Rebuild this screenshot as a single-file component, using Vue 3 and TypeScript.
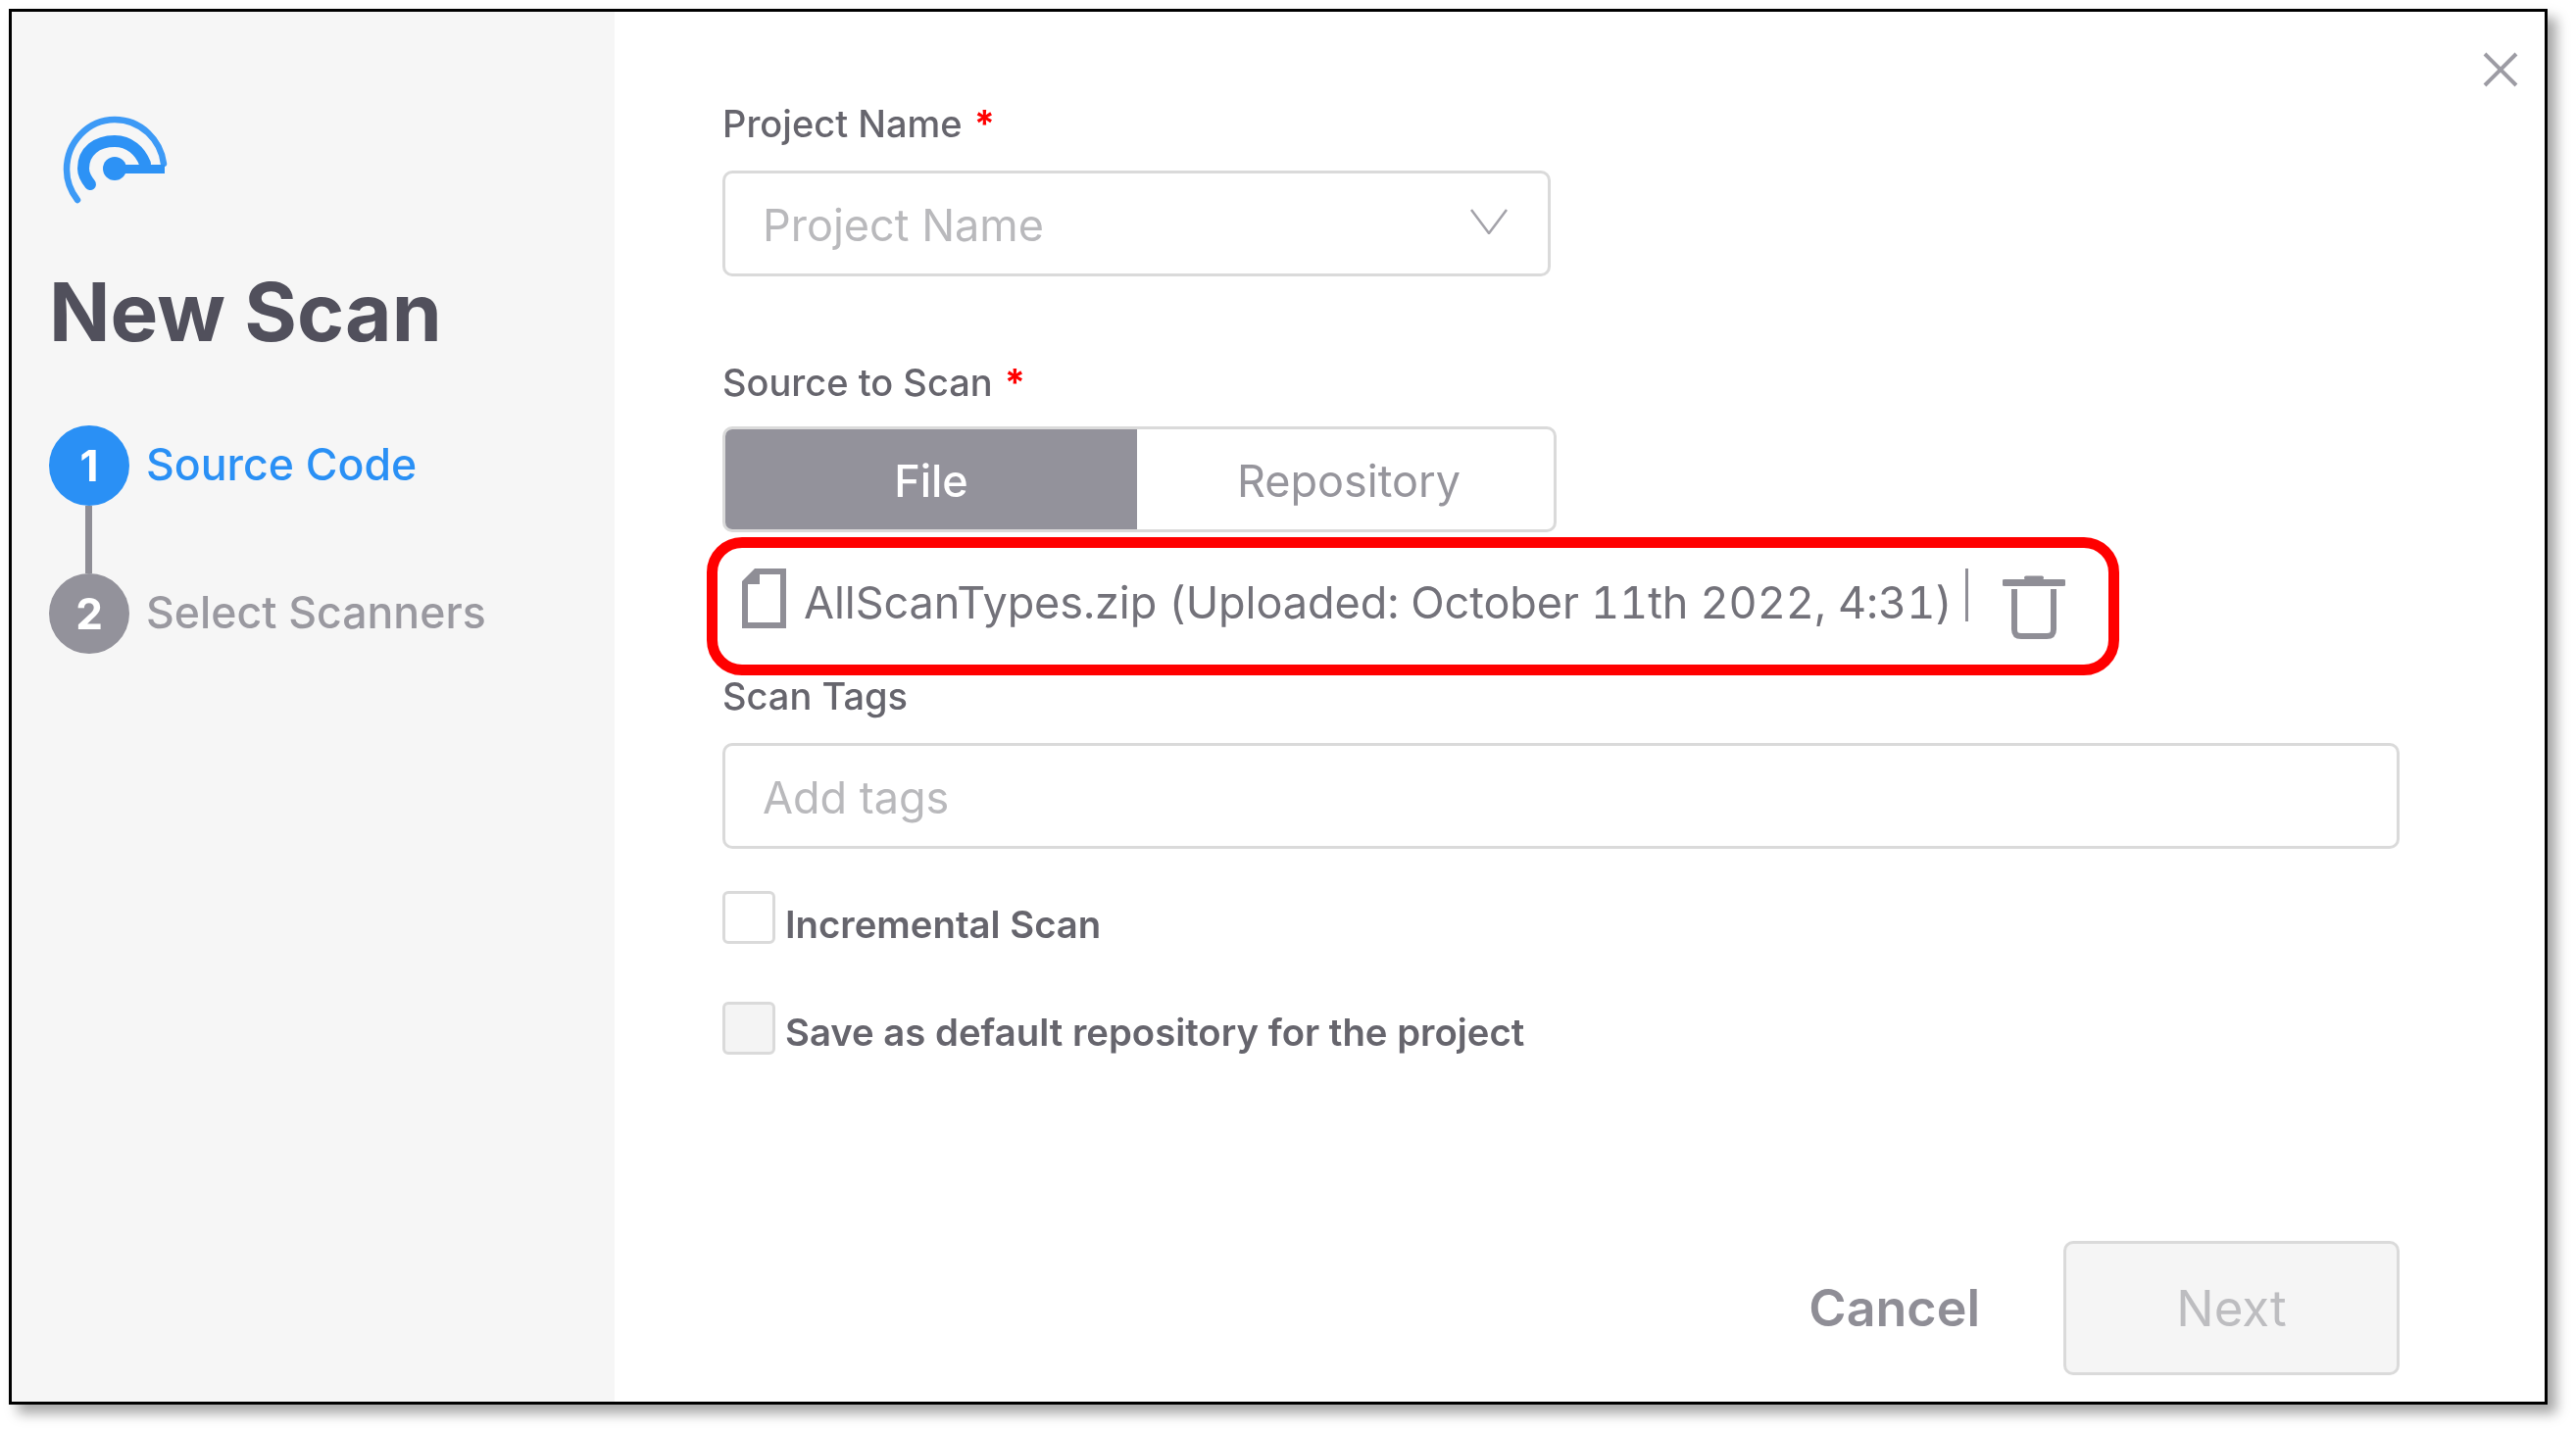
<script setup lang="ts">
const steps: { n: number; label: string; active: boolean }[] = [
  { n: 1, label: 'Source Code', active: true },
  { n: 2, label: 'Select Scanners', active: false },
]
</script>

<template>
  <div class="page">
    <div class="frame">
      <aside class="side">
        <svg class="logo" width="108" height="92" viewBox="0 0 108 92" fill="none">
          <path d="M15 87C8 78 4 68 4 56C4 28 26 5 53 5C80 5 100 26 103 50" stroke="#3d9af6" stroke-width="6.5" stroke-linecap="round" />
          <path d="M28 71C24 66 21 61 21 55C21 37 35 27 53 27C68 27 79 37 84 50" stroke="#2d92f5" stroke-width="12" stroke-linecap="round" />
          <circle cx="53" cy="55" r="12" fill="#2d92f5" />
          <path d="M53 51H104V60H53Z" fill="#2d92f5" />
        </svg>
        <h1 class="title">New Scan</h1>
        <div class="steps">
          <template v-for="(s, i) in steps" :key="s.n">
            <div v-if="i > 0" class="link"></div>
            <div class="step" :class="{ on: s.active }">
              <span class="dot">{{ s.n }}</span>
              <span class="step-label">{{ s.label }}</span>
            </div>
          </template>
        </div>
      </aside>

      <main class="main">
        <svg class="close" width="36" height="36" viewBox="0 0 36 36" fill="none">
          <path d="M2 2L34 34M34 2L2 34" stroke="#9d9ca4" stroke-width="4" />
        </svg>

        <div class="lbl">Project Name <span class="req">*</span></div>
        <div class="field narrow">
          <span class="ph">Project Name</span>
          <svg class="chev" width="38" height="26" viewBox="0 0 38 26" fill="none">
            <path d="M1 1L19 25L37 1" stroke="#a3a2a9" stroke-width="2.5" />
          </svg>
        </div>

        <div class="lbl src">Source to Scan <span class="req">*</span></div>
        <div class="toggle">
          <div class="seg sel">File</div>
          <div class="seg repo">Repository</div>
        </div>

        <div class="file-row">
          <svg class="doc" width="46" height="62" viewBox="0 0 46 62">
            <path fill="#8f8e96" fill-rule="evenodd" d="M13 0H45V61H0V13ZM18 6V16H6V55H39V6Z" />
          </svg>
          <span class="fname">AllScanTypes.zip (Uploaded: October 11th 2022, 4:31)</span>
          <span class="sep"></span>
          <svg class="trash" width="64" height="66" viewBox="0 0 64 66" fill="none">
            <path d="M2 7.5H62" stroke="#8f8e96" stroke-width="7" stroke-linecap="round" />
            <path d="M24 2.5H40" stroke="#8f8e96" stroke-width="4" stroke-linecap="round" />
            <path d="M12 14V55C12 60 14 62 19 62H45C50 62 52 60 52 55V14" stroke="#8f8e96" stroke-width="6" />
          </svg>
          <div class="mark"></div>
        </div>

        <div class="lbl tags">Scan Tags</div>
        <div class="field wide"><span class="ph">Add tags</span></div>

        <label class="check first">
          <span class="box"></span>
          <span class="check-text">Incremental Scan</span>
        </label>
        <label class="check second">
          <span class="box off"></span>
          <span class="check-text">Save as default repository for the project</span>
        </label>

        <footer class="foot">
          <span class="cancel">Cancel</span>
          <div class="next">Next</div>
        </footer>
      </main>
    </div>
  </div>
</template>

<style>
html, body { margin: 0; background: #fff; }
</style>

<style scoped>
.page {
  width: 2628px;
  height: 1463px;
  box-sizing: border-box;
  padding: 9px 0 0 9px;
  font-family: Inter, "Liberation Sans", sans-serif;
  overflow: hidden;
}
.frame {
  width: 2590px;
  height: 1424px;
  box-sizing: border-box;
  border: 3px solid #000;
  background: #fff;
  display: flex;
  box-shadow: 9px 9px 12px rgba(0, 0, 0, 0.35);
}
.side {
  width: 615px;
  flex: none;
  background: #f6f6f6;
  padding: 105px 0 0 38px;
  box-sizing: border-box;
  display: flex;
  flex-direction: column;
}
.logo { margin: 0 0 62px 14px; display: block; }
.title {
  margin: 0;
  font-size: 82px;
  line-height: 96px;
  font-weight: 700;
  color: #51505c;
}
.steps { margin-top: 67px; }
.step { display: flex; align-items: center; gap: 17px; height: 82px; }
.dot {
  width: 82px;
  height: 82px;
  border-radius: 50%;
  background: #93929b;
  color: #fff;
  font-size: 44px;
  font-weight: 700;
  display: flex;
  align-items: center;
  justify-content: center;
}
.step-label { font-size: 44.6px; font-weight: 500; color: #9a99a0; margin-top: -2px; }
.step.on .dot { background: #2a90f5; }
.step.on .step-label { color: #2a90f5; }
.link { width: 7px; height: 69px; background: #8f8e96; margin-left: 37px; }

.main {
  flex: 1;
  position: relative;
  padding: 90px 148px 27px 110px;
  box-sizing: border-box;
  display: flex;
  flex-direction: column;
  min-width: 0;
}
.close { position: absolute; top: 41px; right: 27px; }
.lbl {
  font-size: 38px;
  line-height: 48px;
  font-weight: 500;
  color: #66656d;
  margin-bottom: 24px;
}
.lbl.src { margin-top: 84px; margin-bottom: 21px; }
.lbl.tags { margin-top: 14px; }
.req { color: #f00; margin-left: 2px; font-weight: 700; }
.field {
  height: 108px;
  box-sizing: border-box;
  border: 3px solid #dadada;
  border-radius: 10px;
  padding: 2px 38px 0;
  display: flex;
  align-items: center;
  justify-content: space-between;
  background: #fff;
}
.narrow { width: 845px; }
.wide { width: 100%; }
.ph { font-size: 45px; color: #b9b9bc; }
.chev { margin-top: -6px; margin-right: 3px; }
.toggle {
  width: 851px;
  height: 108px;
  display: flex;
  box-sizing: border-box;
  border: 3px solid #dadada;
  border-radius: 10px;
  overflow: hidden;
}
.seg {
  flex: 1;
  display: flex;
  align-items: center;
  justify-content: center;
  font-size: 45px;
  color: #96959c;
  padding-top: 3px;
}
.seg.repo { padding-left: 4px; }
.seg.sel {
  flex: none;
  width: 420px;
  background: #93929b;
  color: #fff;
  font-weight: 500;
  border-right: 3px solid #fff;
  box-sizing: content-box;
}
.file-row {
  position: relative;
  height: 129px;
  display: flex;
  align-items: center;
  padding: 8px 0 0 20px;
  box-sizing: border-box;
}
.doc { flex: none; margin-top: -2px; }
.fname {
  font-size: 45px;
  color: #73727a;
  margin-left: 17px;
  white-space: nowrap;
  letter-spacing: -0.06px;
  font-variant-numeric: tabular-nums;
  margin-top: 6px;
}
.sep { width: 3px; height: 54px; background: #8f8e96; margin-left: 13px; margin-top: -10px; flex: none; }
.trash { flex: none; margin-left: 35px; margin-top: 16px; }
.mark {
  position: absolute;
  left: -16px;
  top: 5px;
  width: 1441px;
  height: 141px;
  box-sizing: border-box;
  border: 11px solid #f00;
  border-radius: 36px;
}
.check { display: flex; align-items: flex-start; gap: 10px; }
.check.first { margin-top: 43px; }
.check.second { margin-top: 55px; }
.box {
  width: 54px;
  height: 54px;
  box-sizing: border-box;
  border: 3px solid #dadada;
  border-radius: 6px;
  background: #fff;
  flex: none;
}
.box.off { background: #f4f4f4; }
.check-text {
  font-size: 38.3px;
  line-height: 48px;
  font-weight: 600;
  color: #66656d;
}
.first .check-text { padding-top: 10px; }
.second .check-text { padding-top: 7px; }
.foot {
  margin-top: auto;
  display: flex;
  justify-content: flex-end;
  align-items: center;
  gap: 85px;
}
.cancel { font-size: 52px; font-weight: 600; color: #8f8e96; }
.next {
  width: 343px;
  height: 137px;
  box-sizing: border-box;
  border: 3px solid #dadada;
  border-radius: 10px;
  background: #f5f5f5;
  color: #bdbdc0;
  font-size: 51px;
  display: flex;
  align-items: center;
  justify-content: center;
}
.side,
.lbl,
.field,
.toggle,
.doc,
.fname,
.sep,
.trash,
.check,
.foot,
.close {
  filter: blur(0.7px);
}
</style>
